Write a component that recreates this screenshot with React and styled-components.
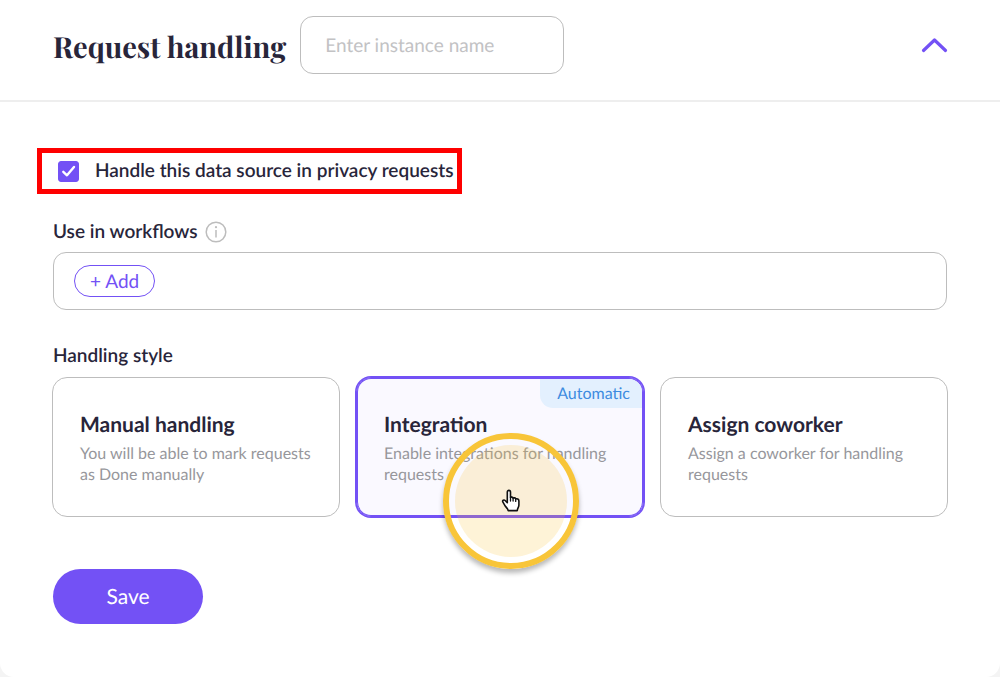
import React, { useState } from "react";
import styled, { createGlobalStyle, css } from "styled-components";

const color = {
  ink: "#28253a",
  accent: "#7351f5",
  line: "#bdbdbd",
  muted: "#97979c",
  placeholder: "#c2c2c4",
};

const GlobalStyle = createGlobalStyle`
  *, *::before, *::after { box-sizing: border-box; }
  body {
    margin: 0;
    background: #f4f4f4;
    color: ${color.ink};
    font-family: Lato, "Liberation Sans", sans-serif;
    text-rendering: geometricPrecision;
  }
  button, input { font-family: inherit; text-rendering: inherit; }
`;

const Panel = styled.section`
  min-height: 100vh;
  background: #fff;
  border-radius: 0 0 14px 14px;
`;

const Header = styled.header`
  display: flex;
  align-items: center;
  gap: 14px;
  padding: 16px 52px 26px 53px;
  border-bottom: 2px solid #eeeeee;
`;

const Title = styled.h1`
  margin: 0;
  padding-top: 3px;
  font-family: "Playfair Display", "Liberation Serif", serif;
  font-size: 29px;
  line-height: 40px;
  font-weight: 700;
  white-space: nowrap;
`;

const NameInput = styled.input`
  width: 264px;
  height: 58px;
  padding: 0 24px;
  border: 1px solid ${color.line};
  border-radius: 13px;
  background: #fff;
  color: ${color.ink};
  font-size: 19px;
  &::placeholder { color: ${color.placeholder}; opacity: 1; }
`;

const CollapseButton = styled.button`
  display: flex;
  margin-left: auto;
  padding: 0;
  border: 0;
  background: none;
  cursor: pointer;
`;

const Body = styled.form`
  display: flex;
  flex-direction: column;
  align-items: flex-start;
  padding: 46px 53px;
`;

const Highlight = styled.div`
  margin-left: -16px;
  border: 5px solid #fe0000;
  padding: 0 4px 0 16px;
`;

const CheckLabel = styled.label`
  display: flex;
  align-items: center;
  gap: 16px;
  height: 36px;
  font-size: 19px;
  line-height: 24px;
  font-weight: 600;
`;

const CheckBox = styled.span`
  display: grid;
  width: 21px;
  height: 21px;
  & > * { grid-area: 1 / 1; }
  & svg { pointer-events: none; visibility: hidden; }
  & input:checked + svg { visibility: visible; }
`;

const CheckInput = styled.input`
  appearance: none;
  width: 21px;
  height: 21px;
  margin: 0;
  border: 1px solid ${color.accent};
  border-radius: 3px;
  &:checked { background: ${color.accent}; }
`;

const FieldHeading = styled.h2`
  display: flex;
  align-items: center;
  gap: 7px;
  margin: ${(p) => (p.$first ? "26px 0 8px" : "34px 0 9px")};
  font-size: 19px;
  line-height: 24px;
  font-weight: 600;
`;

const WorkflowField = styled.div`
  display: flex;
  align-items: center;
  width: 100%;
  min-height: 58px;
  padding: 0 20px;
  border: 1px solid ${color.line};
  border-radius: 13px;
`;

const AddButton = styled.button`
  height: 32px;
  padding: 0 15px;
  border: 1px solid ${color.accent};
  border-radius: 16px;
  background: #fff;
  color: ${color.accent};
  font-size: 19px;
  cursor: pointer;
`;

const CardGrid = styled.div`
  display: grid;
  grid-template-columns: repeat(3, 1fr);
  gap: 16px;
  align-self: stretch;
  margin: 0 -1px;
`;

const Card = styled.div`
  position: relative;
  border: 1px solid ${color.line};
  border-radius: 15px;
  ${(p) =>
    p.$selected &&
    css`
      border-color: ${color.accent};
      box-shadow: 0 0 0 1px ${color.accent}, inset 0 0 0 1px ${color.accent};
      background: #faf9ff;
    `}
`;

const CardLabel = styled.label`
  display: block;
  min-height: 138px;
  padding: 33px 27px 30px;
  cursor: pointer;
`;

const CardRadio = styled.input`
  position: absolute;
  inset: 0;
  margin: 0;
  opacity: 0;
  pointer-events: none;
`;

const CardTitle = styled.strong`
  display: block;
  font-size: 21px;
  line-height: 28px;
  font-weight: 700;
`;

const CardText = styled.span`
  display: block;
  margin-top: 4px;
  color: ${color.muted};
  font-size: 16px;
  line-height: 21px;
`;

const Badge = styled.span`
  position: absolute;
  top: 1px;
  right: 1px;
  padding: 1px 12px 0 17px;
  border-radius: 0 13px 0 13px;
  background: #e3f0fe;
  color: #3d8be0;
  font-size: 16px;
  line-height: 28px;
`;

const Pointer = styled.div`
  position: absolute;
  z-index: 1;
  left: 50%;
  bottom: -53px;
  width: 136px;
  height: 136px;
  margin-left: -57px;
  display: grid;
  place-items: center;
  border: 6px solid #f8c539;
  border-radius: 50%;
  box-shadow: 0 4px 5px rgba(0, 0, 0, 0.28);
  pointer-events: none;
`;

const PointerDisc = styled.div`
  display: grid;
  place-items: center;
  width: 112px;
  height: 112px;
  border-radius: 50%;
  background: rgba(248, 197, 57, 0.2);
`;

const SaveButton = styled.button`
  width: 150px;
  height: 55px;
  margin-top: 52px;
  border: 0;
  border-radius: 28px;
  background: ${color.accent};
  color: #fff;
  font-size: 21px;
  cursor: pointer;
`;

const STYLES = [
  {
    id: "manual",
    title: "Manual handling",
    text: "You will be able to mark requests as Done manually",
  },
  {
    id: "integration",
    title: "Integration",
    text: "Enable integrations for handling requests",
    badge: "Automatic",
  },
  {
    id: "coworker",
    title: "Assign coworker",
    text: "Assign a coworker for handling requests",
  },
];

function ChevronUp() {
  return (
    <svg width="27" height="16" viewBox="0 0 27 16" fill="none" aria-hidden="true">
      <path d="M2.500 13.500 13.500 3 24.500 13.500" stroke={color.accent} strokeWidth="3.200" strokeLinecap="round" strokeLinejoin="round" />
    </svg>
  );
}

function InfoIcon() {
  return (
    <svg width="22" height="22" viewBox="0 0 22 22" fill="none" aria-hidden="true">
      <circle cx="11" cy="11" r="9.800" stroke={color.line} strokeWidth="1.500" />
      <path d="M11 9v7.500" stroke={color.line} strokeWidth="1.500" />
      <circle cx="11" cy="6.200" r="1.100" fill={color.line} />
    </svg>
  );
}

function HandIcon() {
  return (
    <svg width="20" height="24" viewBox="0 0 20 24" aria-hidden="true">
      <path
        d="M6.300 13.700V3.200C6.300 2 7 1.400 7.900 1.400S9.500 2 9.500 3.200v5.200c.3-.5 2.300-.5 2.600.7.7-.6 2.400-.3 2.600.8 1.300-.4 3.200.1 3.200 2v4c0 2.600-1.600 3.400-1.600 5.700H7.100c0-1.900-2.200-3.300-3.300-5.300-.7-1.300-1.500-2.600-2-3.500-.7-1.300 1.100-2.500 2.300-1.300z"
        fill="#fff"
        stroke="#111"
        strokeWidth="1.600"
        strokeLinejoin="round"
      />
      <path d="M9.500 8.400v3.600M12.100 9.100v3M14.700 9.900v2.500" stroke="#111" strokeWidth="1.300" strokeLinecap="round" />
    </svg>
  );
}

export default function App() {
  const [enabled, setEnabled] = useState(true);
  const [style, setStyle] = useState("integration");

  return (
    <>
      <GlobalStyle />
      <Panel>
        <Header>
          <Title>Request handling</Title>
          <NameInput type="text" placeholder="Enter instance name" aria-label="Instance name" />
          <CollapseButton type="button" aria-label="Collapse section">
            <ChevronUp />
          </CollapseButton>
        </Header>
        <Body onSubmit={(e) => e.preventDefault()}>
          <Highlight>
            <CheckLabel>
              <CheckBox>
                <CheckInput type="checkbox" checked={enabled} onChange={(e) => setEnabled(e.target.checked)} />
                <svg width="21" height="21" viewBox="0 0 21 21" fill="none" aria-hidden="true">
                  <path d="M5.300 10.800 9 14.300 16 6" stroke="#fff" strokeWidth="2.400" strokeLinecap="round" strokeLinejoin="round" />
                </svg>
              </CheckBox>
              Handle this data source in privacy requests
            </CheckLabel>
          </Highlight>

          <FieldHeading $first>
            Use in workflows <InfoIcon />
          </FieldHeading>
          <WorkflowField>
            <AddButton type="button">+ Add</AddButton>
          </WorkflowField>

          <FieldHeading id="handling-style">Handling style</FieldHeading>
          <CardGrid role="radiogroup" aria-labelledby="handling-style">
            {STYLES.map((s) => (
              <Card key={s.id} $selected={style === s.id}>
                <CardLabel>
                  <CardRadio type="radio" name="style" value={s.id} checked={style === s.id} onChange={() => setStyle(s.id)} />
                  <CardTitle>{s.title}</CardTitle>
                  <CardText>{s.text}</CardText>
                </CardLabel>
                {s.badge && <Badge>{s.badge}</Badge>}
                {s.id === "integration" && (
                  <Pointer aria-hidden="true">
                    <PointerDisc>
                      <HandIcon />
                    </PointerDisc>
                  </Pointer>
                )}
              </Card>
            ))}
          </CardGrid>

          <SaveButton type="submit">Save</SaveButton>
        </Body>
      </Panel>
    </>
  );
}
